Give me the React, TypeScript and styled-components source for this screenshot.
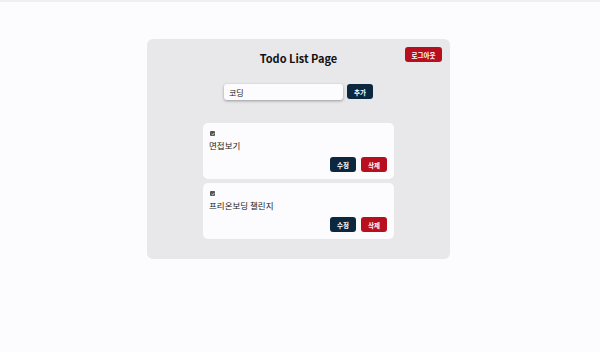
import styled, { createGlobalStyle } from "styled-components";

const GlobalStyle = createGlobalStyle`
  html, body {
    margin: 0;
    padding: 0;
    background: #fcfbfd;
    font-family: "Noto Sans CJK KR", "Noto Sans", sans-serif;
  }
`;

const TopLine = styled.div`
  height: 2px;
  background: #efeef1;
`;

const Panel = styled.div`
  position: relative;
  width: 303px;
  margin: 37px 0 0 147px;
  padding: 8px 0 20px;
  box-sizing: border-box;
  background: #e8e7e9;
  border-radius: 6px;
  display: flex;
  flex-direction: column;
  align-items: center;
`;

const Title = styled.h1`
  margin: 2px 0 0;
  font-size: 11px;
  font-weight: 700;
  line-height: 18px;
  color: #111;
`;

const Button = styled.button<{ $tone: "red" | "navy" }>`
  border: none;
  border-radius: 3px;
  padding: 0;
  height: 15px;
  background: ${(p) => (p.$tone === "red" ? "#b80f1f" : "#0b2840")};
  color: #fff;
  font-family: inherit;
  font-size: 6.5px;
  font-weight: 700;
  display: flex;
  align-items: center;
  justify-content: center;
`;

const LogoutButton = styled(Button)`
  position: absolute;
  top: 8px;
  right: 8px;
  width: 37px;
`;

const AddButton = styled(Button)`
  width: 26px;
`;

const InputRow = styled.div`
  margin-top: 17px;
  display: flex;
  align-items: flex-start;
  gap: 4px;
`;

const TextInput = styled.input`
  width: 119px;
  height: 16px;
  box-sizing: border-box;
  border: none;
  border-radius: 3px;
  padding: 0 5px;
  background: #fcfbfd;
  box-shadow: 0 1px 3px rgba(0, 0, 0, 0.35);
  font-family: inherit;
  font-size: 8px;
  color: #222;
  outline: none;
`;

const List = styled.div`
  margin-top: 23px;
  display: flex;
  flex-direction: column;
  gap: 4px;
`;

const Card = styled.div`
  width: 191px;
  height: 56px;
  box-sizing: border-box;
  padding: 8px 7px 7px 6px;
  background: #fcfbfd;
  border-radius: 5px;
  display: flex;
  flex-direction: column;
`;

const Check = styled.span`
  width: 5px;
  height: 5px;
  margin-left: 1px;
  border-radius: 1px;
  background: #555;
  display: flex;
  align-items: center;
  justify-content: center;
`;

const TodoText = styled.div`
  margin-top: 3px;
  font-size: 8.5px;
  line-height: 12px;
  color: #222;
`;

const Actions = styled.div`
  margin-top: auto;
  display: flex;
  justify-content: flex-end;
  gap: 5px;
`;

const SmallButton = styled(Button)`
  width: 26px;
`;

const todos = ["면접보기", "프리온보딩 챌린지"];

export default function App() {
  return (
    <>
      <GlobalStyle />
      <TopLine />
      <Panel>
        <LogoutButton $tone="red">로그아웃</LogoutButton>
        <Title>Todo List Page</Title>
        <InputRow>
          <TextInput defaultValue="코딩" />
          <AddButton $tone="navy">추가</AddButton>
        </InputRow>
        <List>
          {todos.map((t) => (
            <Card key={t}>
              <Check>
                <svg width="4" height="4" viewBox="0 0 4 4">
                  <path d="M0.6 2.1 L1.6 3 L3.4 0.9" stroke="#fff" strokeWidth="0.7" fill="none" />
                </svg>
              </Check>
              <TodoText>{t}</TodoText>
              <Actions>
                <SmallButton $tone="navy">수정</SmallButton>
                <SmallButton $tone="red">삭제</SmallButton>
              </Actions>
            </Card>
          ))}
        </List>
      </Panel>
    </>
  );
}
